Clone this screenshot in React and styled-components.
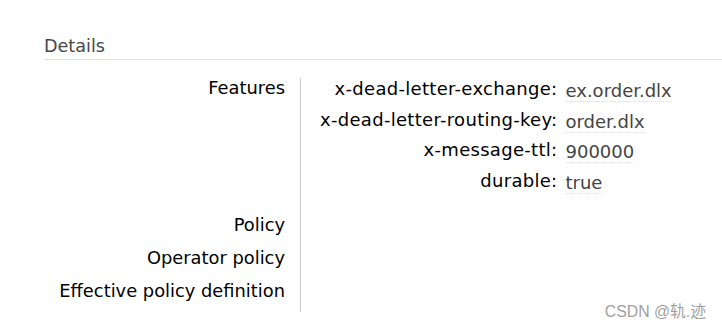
import React from "react";
import styled, { createGlobalStyle } from "styled-components";

const GlobalStyle = createGlobalStyle`
  html, body {
    margin: 0;
    padding: 0;
    background: #fff;
  }
  body {
    font-family: "DejaVu Sans", Verdana, sans-serif;
  }
`;

const Page = styled.div`
  position: relative;
  width: 722px;
  height: 330px;
  overflow: hidden;
  padding: 36px 0 0 44px;
  box-sizing: border-box;
  font-size: 18px;
  color: #000;
`;

const Heading = styled.h2`
  margin: 0;
  font-size: 17.6px;
  font-weight: normal;
  line-height: 20px;
  color: #484848;
  padding-bottom: 3px;
  border-bottom: 1px solid #e2e2e2;
`;

const Table = styled.div`
  margin-top: 18px;
  display: grid;
  grid-template-columns: 257px 1fr;
`;

const Label = styled.div`
  box-sizing: border-box;
  text-align: right;
  font-size: 17.85px;
  padding: ${(p) => (p.$first ? "1px" : "3px")} 15px 0 0;
  height: ${(p) => p.$h}px;
  line-height: 18px;
  border-right: 1px solid #cccccc;
`;

const Cell = styled.div`
  padding-left: 19px;
`;

const Args = styled.div`
  display: grid;
  grid-template-columns: max-content max-content;
  column-gap: 8px;
`;

const Key = styled.div`
  text-align: right;
  padding-top: 2px;
  height: 30.7px;
  box-sizing: border-box;
  line-height: 18px;
  letter-spacing: 0.3px;
`;

const Value = styled.div`
  padding-top: 2px;
  height: 30.7px;
  box-sizing: border-box;
`;

const ValueText = styled.span`
  display: inline-block;
  line-height: 18px;
  color: #444;
  padding-bottom: 1px;
  border-bottom: 1px dotted #dddddd;
`;

const Watermark = styled.div`
  position: absolute;
  right: 16px;
  bottom: 8px;
  font-family: "Liberation Sans", "Noto Sans CJK SC", Arial, sans-serif;
  font-size: 15.8px;
  color: #a0a0a0;
`;

const args = [
  ["x-dead-letter-exchange:", "ex.order.dlx"],
  ["x-dead-letter-routing-key:", "order.dlx"],
  ["x-message-ttl:", "900000"],
  ["durable:", "true"],
];

export default function App() {
  return (
    <>
      <GlobalStyle />
      <Page>
        <Heading>Details</Heading>
        <Table>
          <Label $first $h={135}>Features</Label>
          <Cell>
            <Args>
              {args.map(([k, v]) => (
                <React.Fragment key={k}>
                  <Key>{k}</Key>
                  <Value>
                    <ValueText>{v}</ValueText>
                  </Value>
                </React.Fragment>
              ))}
            </Args>
          </Cell>
          <Label $h={33}>Policy</Label>
          <Cell />
          <Label $h={33}>Operator policy</Label>
          <Cell />
          <Label $h={33}>Effective policy definition</Label>
          <Cell />
        </Table>
        <Watermark>CSDN @轨.迹</Watermark>
      </Page>
    </>
  );
}
